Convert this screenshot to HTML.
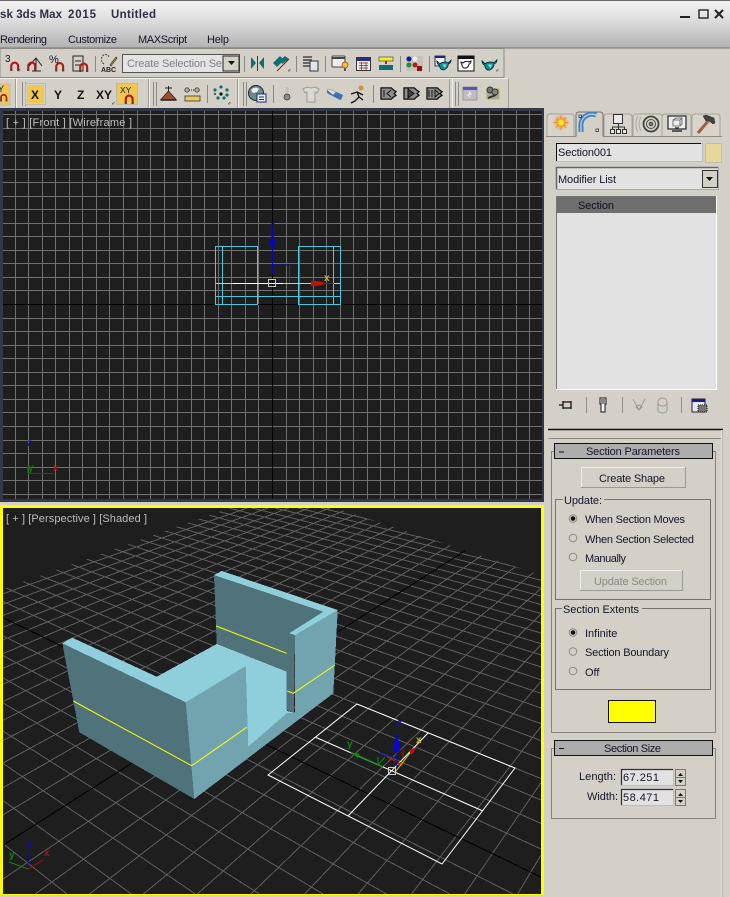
<!DOCTYPE html>
<html lang="en"><head><meta charset="utf-8"><title>3ds Max</title>
<style>
html,body{margin:0;padding:0;background:#d4d0c8;width:730px;height:897px;overflow:hidden}
svg{display:block;position:absolute;left:0;top:0}
text{font-family:"Liberation Sans",sans-serif;font-size:11px;fill:#14142a}
.g text,text.vl{fill:#bdbdbd;font-size:11px}
</style></head><body>
<svg id="s" width="730" height="897" viewBox="0 0 730 897" xmlns="http://www.w3.org/2000/svg">
<defs>
<linearGradient id="tb" x1="0" y1="0" x2="0" y2="1"><stop offset="0" stop-color="#f2f2f2"/><stop offset=".35" stop-color="#e2e2e2"/><stop offset="1" stop-color="#b2b2b2"/></linearGradient>
<clipPath id="cf"><rect x="3" y="111" width="539" height="388"/></clipPath>
<clipPath id="cp"><rect x="3" y="508" width="538" height="386"/></clipPath>
<clipPath id="cg"><polygon points="3,589 280,490 541,575 541,894 3,894"/></clipPath>
<radialGradient id="sun"><stop offset="0" stop-color="#ffe040"/><stop offset=".5" stop-color="#f0a040"/><stop offset="1" stop-color="#e8c0a0" stop-opacity=".3"/></radialGradient>
<symbol id="mg" viewBox="0 0 16 16" overflow="visible">
<path d="M2 15V8a5.5 5.5 0 0 1 11 0v7" fill="none" stroke="#b01818" stroke-width="3.4"/>
<path d="M.3 13h3.4v3H.3zM11.3 13h3.4v3h-3.4z" fill="#444"/>
</symbol>
<symbol id="tp" viewBox="0 0 18 14" overflow="visible">
<path d="M1 3l3 3h1c1-2 7-2 9-1l3-3c0 2-1 4-3 4 0 3-2 6-5 7H7C5 12 4 10 4 8 2 7 1 5 1 3z" fill="#0f8d8f" stroke="#04242a" stroke-width=".9"/>
<path d="M7 7l5 0-2 4z" fill="#7fe0e0"/>
</symbol>
<symbol id="key" viewBox="0 0 18 16" overflow="visible">
<path d="M1 2h11l2 2 3 2-2 2 2 2-3 2-2 2H1z" fill="#8e8e8e" stroke="#111" stroke-width="1.4"/>
</symbol>
</defs>

<!-- title bar -->
<rect width="730" height="48" fill="url(#tb)"/>
<rect width="730" height="1" fill="#666"/>
<rect y="47.5" width="730" height="1" fill="#777"/>
<text x="0" y="18" font-weight="bold" style="font-size:11.5px;fill:#2c3044" textLength="62">sk 3ds Max</text>
<text x="68" y="18" font-weight="bold" style="font-size:11.5px;fill:#2c3044" textLength="28">2015</text>
<text x="111" y="18" font-weight="bold" style="font-size:11.5px;fill:#2c3044" textLength="45">Untitled</text>
<rect x="680" y="16" width="10" height="2" fill="#222"/>
<rect x="699" y="10" width="9" height="8" fill="none" stroke="#222" stroke-width="1.4"/>
<path d="M715 10l8 8m0-8l-8 8" stroke="#222" stroke-width="2" fill="none"/>
<text x="0" y="43" textLength="47" fill="#1c2036">Rendering</text>
<text x="68" y="43" textLength="49">Customize</text>
<text x="138" y="43" textLength="49">MAXScript</text>
<text x="207" y="43" textLength="22">Help</text>

<!-- toolbars -->
<rect y="48.5" width="504" height="29" fill="#d4d0c8" stroke="#8e8b84"/>
<path d="M0 78.5H508" stroke="#f2f0ea"/>
<rect x="-1" y="79" width="16" height="29" fill="#d4d0c8"/>
<path d="M0 108.5H508M15.500 79V108M148.500 79V108M237.500 79V108M449.500 79V108M508.500 79V108" stroke="#a09d96"/>
<path d="M16.500 79V108M149.500 79V108M238.500 79V108M452.500 79V108" stroke="#f2f0ea"/>
<path d="M22.500 82V106M25.500 82V106M153.500 82V106M156.500 82V106M243.500 82V106M246.500 82V106M455.500 82V106M458.500 82V106" stroke="#8a8a86"/>

<!-- row 1 icons -->
<text x="5" y="62" style="font-size:10px">3</text><use href="#mg" x="10" y="60" width="10" height="12"/>
<path d="M18 71l2 0 0-2z" fill="#fff" stroke="#333" stroke-width=".5"/>
<path d="M29 66l7-8 6 8M36 58v13M32 71h9" fill="none" stroke="#222"/><use href="#mg" x="27" y="60" width="10" height="12"/>
<text x="49" y="63" style="font-size:11px">%</text><use href="#mg" x="55" y="61" width="10" height="11"/>
<rect x="73" y="56" width="10" height="15" fill="none" stroke="#222"/><path d="M75 61h6M75 65h6" stroke="#222"/><use href="#mg" x="79" y="62" width="10" height="10"/>
<path d="M95.500 56V72" stroke="#888"/>
<path d="M104 64a4 5 0 1 1 5-7" fill="none" stroke="#444" stroke-dasharray="2 1"/><path d="M110 65l6-8 1 1-6 8z" fill="#d8a040" stroke="#333" stroke-width=".7"/>
<text x="101" y="72" font-weight="bold" style="font-size:7px;fill:#222" textLength="15">ABC</text>

<rect x="122.500" y="54.500" width="117" height="18" fill="#e4e4e4" stroke="#555"/>
<text x="127" y="67" style="fill:#7d8288" textLength="95">Create Selection Se</text>
<rect x="223" y="56" width="16" height="15" fill="#d4d0c8" stroke="#222" stroke-width="1"/>
<path d="M228 61h7l-3.500 4z" fill="#111"/>
<path d="M244.500 56V72" stroke="#888"/>
<path d="M257.500 56V71" stroke="#7d1d1d"/><path d="M251 57l5 6-5 6zM264 57l-5 6 5 6z" fill="#0f7070"/>
<path d="M273 63l7-7 4 4-7 7z" fill="#0f7070"/><path d="M280 60l5-4 4 3-7 5z" fill="#0f7070"/><path d="M277 71l12-12" stroke="#7d1d1d"/>
<path d="M288 71l2 0 0-2z" fill="#fff" stroke="#333" stroke-width=".5"/>
<path d="M296.500 56V72" stroke="#888"/>
<path d="M303 57h9M303 60h9M303 63h9M303 66h7" stroke="#444" stroke-width="1.500"/><rect x="310" y="61" width="8" height="10" fill="#dfe6ef" stroke="#333"/>
<path d="M325.500 56V72" stroke="#888"/>
<rect x="332" y="56" width="13" height="11" rx="1" fill="#eee" stroke="#444"/><path d="M332 58h13" stroke="#444" stroke-width="2"/>
<circle cx="345" cy="65" r="3" fill="#f0c030" stroke="#a04010" stroke-width=".7"/><rect x="344" y="68" width="2" height="3" fill="#555"/>
<rect x="356.500" y="57.500" width="14" height="13" fill="#eee" stroke="#333"/><rect x="357" y="58" width="13" height="3" fill="#26307c"/>
<path d="M359 63h9M359 65.500h9M359 68h9" stroke="#b05030"/><path d="M361.500 62v8M366 62v8" stroke="#333" stroke-width=".6"/>
<rect x="379" y="57" width="14" height="4" fill="#f0f030" stroke="#333" stroke-width=".6"/><rect x="379" y="65" width="14" height="5" fill="#0f7070"/><path d="M386 61v3" stroke="#c02020" stroke-width="2"/>
<path d="M400.500 56V72" stroke="#888"/>
<rect x="406" y="56" width="17" height="15" fill="#c5c2bc"/>
<circle cx="409" cy="59" r="2.500" fill="#111a90"/><circle cx="415" cy="59" r="2.500" fill="#eee"/><circle cx="409" cy="65" r="2.500" fill="#109040"/><circle cx="415" cy="65" r="2.500" fill="#c01818"/><rect x="417" y="66" width="5" height="5" fill="#901010"/>
<path d="M429.500 56V72" stroke="#888"/>
<rect x="435" y="56" width="10" height="10" fill="#eee" stroke="#334"/><rect x="435" y="56" width="10" height="2" fill="#23237a"/><use href="#tp" x="436" y="58" width="16" height="13"/>
<rect x="458" y="56" width="16" height="15" fill="#fff" stroke="#111"/><rect x="458" y="56" width="16" height="3" fill="#111"/>
<path d="M461 62l2 1c2-2 5-2 6-1l2-1c0 2-1 3-2 3 0 2-2 4-3 4h-2c-1 0-2-2-2-3-1-1-1-2-1-3z" fill="#fff" stroke="#111"/>
<use href="#tp" x="481" y="58" width="17" height="13"/><path d="M496 71l2 0 0-2z" fill="#fff" stroke="#333" stroke-width=".5"/>

<!-- row 2 icons -->
<rect x="0" y="84" width="10" height="21" fill="#f0c850" stroke="#bbb"/><text x="-2" y="92" style="font-size:9px">Y</text><use href="#mg" x="0" y="92" width="8" height="11"/>
<rect x="25.500" y="83.500" width="20" height="21" fill="#d0d0ca" stroke="#bdbab2"/><rect x="27" y="85" width="17" height="18" fill="#f0c850"/>
<text x="31" y="99" font-weight="bold" style="font-size:12px;fill:#111">X</text>
<text x="54" y="99" font-weight="bold" style="font-size:12px;fill:#111">Y</text>
<text x="77" y="99" font-weight="bold" style="font-size:12px;fill:#111">Z</text>
<text x="96" y="99" font-weight="bold" style="font-size:12px;fill:#111">XY</text>
<path d="M112 104l2 0 0-2z" fill="#fff" stroke="#333" stroke-width=".5"/>
<rect x="116.500" y="83.500" width="21" height="21" fill="#f0c850" stroke="#bdbab2"/><text x="120" y="93" style="font-size:8.500px">XY</text><use href="#mg" x="124" y="94" width="11" height="10"/>
<path d="M168.500 86v8" stroke="#222"/><path d="M165 88h7" stroke="#222"/><path d="M168.500 91l8 9h-16z" fill="#9c5030" stroke="#222" stroke-width=".8"/><path d="M161 100h15" stroke="#222" stroke-width="1.500"/>
<circle cx="187" cy="90" r="2.200" fill="#aaa" stroke="#222" stroke-width=".7"/><circle cx="197" cy="90" r="2.200" fill="#aaa" stroke="#222" stroke-width=".7"/><path d="M189 90h6" stroke="#222" stroke-dasharray="1 1"/>
<rect x="185" y="96" width="15" height="5" fill="#e8c860" stroke="#333" stroke-width=".8"/>
<path d="M207.500 85V103" stroke="#888"/>
<g fill="#0f7070"><circle cx="221" cy="87" r="1.600"/><circle cx="215" cy="90" r="1.600"/><circle cx="227" cy="90" r="1.600"/><circle cx="218" cy="98" r="1.600"/><circle cx="224" cy="98" r="1.600"/><circle cx="221" cy="94" r="1.600" fill="#111"/><circle cx="215" cy="94" r="1.200" fill="#555"/><circle cx="227" cy="95" r="1.600"/></g>
<path d="M228 104l2 0 0-2z" fill="#fff" stroke="#333" stroke-width=".5"/>
<circle cx="256" cy="93" r="7.500" fill="#6a8a8c" stroke="#222"/><path d="M251 90c3-3 6-3 8-1l-2 3-4 1z" fill="#e8eef0"/>
<rect x="257" y="94" width="9" height="8" fill="#e8eef0" stroke="#23237a"/><path d="M259 97h5M259 99.500h5" stroke="#23237a"/>
<path d="M273.500 85V103" stroke="#888"/>
<circle cx="287" cy="97" r="3" fill="#8c8c8c" stroke="#333" stroke-width=".7"/><path d="M287 87v6" stroke="#bbb" stroke-width="3" opacity=".7"/>
<path d="M303 89l4-2 4 1 4-1 4 2-2 4-2-1v10h-8V92l-2 1z" fill="#d8d8d4" stroke="#9a9a96"/>
<path d="M327 90l3-1 13 6-2 5-3-1-11-6z" fill="#4070b0"/><path d="M327 90l3-1 6 3-3 3z" fill="#d8dde0" stroke="#888" stroke-width=".5"/>
<path d="M351 94l6-2 2 5-4 4M357 92l6 3M355 101l-4 2M359 97l4 3" stroke="#111" stroke-width="1.300" fill="none"/><circle cx="361" cy="88" r="2.500" fill="#d09040"/>
<path d="M373.500 85V103" stroke="#888"/>
<use href="#key" x="380" y="86" width="17" height="15"/><path d="M384 90v7M391 90l-4 3.500 4 3.500" stroke="#111" fill="none"/>
<use href="#key" x="403" y="86" width="17" height="15"/><path d="M408 89l6 4.500-6 4.500z" fill="#444" stroke="#111"/>
<use href="#key" x="426" y="86" width="17" height="15"/><path d="M429 90v7M432 90v7M435 90l4 3.500-4 3.500z" stroke="#111" fill="none"/>
<rect x="463" y="87" width="14" height="13" fill="#c0bec4" stroke="#999"/><rect x="463" y="87" width="14" height="3" fill="#5a50c0"/><path d="M469 91l3 3-3 1 2 3-4-3 2-1z" fill="#eee"/>
<rect x="486" y="88" width="14" height="12" fill="#a8a8a0" stroke="#e0dc80"/><circle cx="490" cy="90" r="3" fill="#777" stroke="#333"/><circle cx="495" cy="92" r="3" fill="#888" stroke="#333"/><path d="M488 98l8-3" stroke="#333" stroke-width="2"/>

<!-- front viewport -->
<rect x="0" y="108" width="544" height="394" fill="#333a47"/>
<rect x="3" y="111" width="539" height="388" fill="#1e1e1e"/>
<g clip-path="url(#cf)"><g id="gf" shape-rendering="crispEdges"></g>
<g fill="none" shape-rendering="crispEdges">
<path d="M215.500 246.500H257.500V304.500H215.500ZM222.500 246.500V304.500M298.500 246.500H340.500V304.500H298.500ZM333.500 246.500V304.500M215.500 296.500H340.500" stroke="#4fc6dc"/>
<path d="M216 283.500H233M283 283.500H340" stroke="#f0dc00"/>
<path d="M233 283.500H283" stroke="#fff"/>
<path d="M272.500 273V228" stroke="#0606b0"/>
<path d="M272.500 265H289.500" stroke="#0606b0"/><path d="M289.500 265V283" stroke="#a01010"/>
<rect x="268.500" y="279.500" width="7" height="7" fill="none" stroke="#c8c8c8"/>
</g>
<path d="M272.500 232l2.500 10 1 3h-7l1-3z" fill="#0606c0"/>
<path d="M311 281h6l7 1.500v2l-7 1.500h-6z" fill="#c01010"/>
<path d="M324 283.500h10" stroke="#a01010"/>
<text x="270" y="228" font-weight="bold" style="font-size:10px;fill:#0a0ab0">z</text>
<text x="324" y="281" font-weight="bold" style="font-size:10px;fill:#c8b820">x</text>
<path d="M27.500 450V473.500H53" fill="none" stroke="#0808b0"/><path d="M28 473.500H53" stroke="#a01010"/>
<path d="M28 473V466" stroke="#0a7a10"/>
<text x="27" y="446" font-weight="bold" style="font-size:10px;fill:#0a0ab0">z</text>
<text x="28" y="471" font-weight="bold" style="font-size:10px;fill:#0a7a10">y</text>
<text x="53" y="471" font-weight="bold" style="font-size:10px;fill:#a01010">x</text>
</g>
<text class="vl" x="6" y="126" textLength="126" lengthAdjust="spacing">[ + ] [Front ] [Wireframe ]</text>

<!-- perspective viewport -->
<rect x="0" y="505" width="544" height="390" fill="#ffff00"/>
<rect x="3" y="508" width="538" height="386" fill="#1e1e1e"/>
<g clip-path="url(#cp)"><g clip-path="url(#cg)"><g id="gp" shape-rendering="crispEdges"></g></g>
<g shape-rendering="crispEdges">
<polygon points="62.300,643.300 185.700,702.300 194.300,799 79.300,732.300" fill="#4f727b"/>
<polygon points="62.300,643.300 72.300,637.700 156.700,676.700 216.700,644 245.700,666 185.700,702.300" fill="#8fcfdc"/>
<polygon points="185.700,702.300 245.700,666 248.300,746.700 295,712 295,635 337.700,610 333.300,693.300 194.300,799" fill="#72a4b0"/>
<polygon points="216.700,644 286.700,671.700 287,711 295,713 248.300,746.700 245.700,666" fill="#8fcfdc"/>
<polygon points="248.300,746.700 287,713 294.500,713 294.500,715" fill="#72a4b0"/>
<polygon points="214,575 323.300,611.700 289.300,633.300 295,635 294,713 286.700,710 286.700,671.700 216.700,644" fill="#4f727b"/>
<polygon points="214,575 221.700,571 337.700,610 295,635 289.300,633.300 323.300,611.700" fill="#8fcfdc"/>
</g>
<g fill="none" stroke-width="1">
<path d="M73.300 701L191.700 765.700 246.700 727.300M216 626L286.700 653.300M287.300 691L293.300 693.300 335 665" stroke="#ffff00"/>
<path d="M357 704L515 768 442 864 268 775ZM315 737L483 811M428 733L348 816" stroke="#fff"/>
<path d="M383 766.700L350.700 752.300" stroke="#0a8a10" stroke-width="1.200"/>
<path d="M378 757V765M378 765L385 757" stroke="#0a8a10"/>
<path d="M380 752L394 758" stroke="#1010c0"/>
<path d="M394 760L402 766M403 750V758M387 757L403 765" stroke="#c01010"/>
<path d="M397 771V743" stroke="#0606c0" stroke-width="1.200"/>
<path d="M396 771L410 753" stroke="#e8d000" stroke-width="1"/>
</g>
<path d="M396.700 733l2.500 10 .5 9h-6l.5-9z" fill="#0606d0"/>
<path d="M416.700 747l-8 3 3 5z" fill="#c01010"/>
<path d="M350.700 752.300l9 1.500-2 4.500z" fill="#0a8a10"/>
<rect x="388.500" y="767.500" width="7" height="7" fill="none" stroke="#d0d0d0"/>
<text x="397" y="726" font-weight="bold" style="font-size:10px;fill:#1010c0">z</text>
<text x="416" y="743" font-weight="bold" style="font-size:10px;fill:#d0b010">x</text>
<text x="347" y="747" font-weight="bold" style="font-size:10px;fill:#0a8a10">y</text>
<path d="M28 869V849" stroke="#0808b0" fill="none"/><path d="M28 869L43 860" stroke="#b01010" fill="none"/><path d="M28 869L9 862" stroke="#0a8a10" fill="none"/>
<text x="27" y="847" font-weight="bold" style="font-size:10px;fill:#0a0ab0">z</text>
<text x="9" y="858" font-weight="bold" style="font-size:10px;fill:#0a8a10">y</text>
<text x="44" y="856" font-weight="bold" style="font-size:10px;fill:#b01010">x</text>
</g>
<text class="vl" x="6" y="522" textLength="141" lengthAdjust="spacing">[ + ] [Perspective ] [Shaded ]</text>

<!-- command panel -->
<path d="M547 136.500V117q0-3 3-3H571q3 0 3 3V136.500M604 136.500V117q0-3 3-3H629q3 0 3 3V136.500M633 136.500V117q0-3 3-3H659q3 0 3 3V136.500M662 136.500V117q0-3 3-3H688q3 0 3 3V136.500M692 136.500V117q0-3 3-3H717q3 0 3 3V136.500" fill="#d8d4cc" stroke="#a5a29a"/>
<path d="M546 136.500H576M603 136.500H722" stroke="#8e8b84"/>
<path d="M576 136.500V115q0-3 3-3H600q3 0 3 3V136.500" fill="#d4d0c8" stroke="#75726c"/>
<circle cx="561" cy="122.500" r="8" fill="url(#sun)"/>
<g stroke="#e89030" stroke-width="1"><path d="M561 115v15M553.500 122.500h15M556 117.500l10 10M566 117.500l-10 10"/></g><circle cx="561" cy="122.500" r="3" fill="#f8e030"/>
<path d="M581 132V127a11 11 0 0 1 15-12" fill="none" stroke="#3f7fc0" stroke-width="5"/><path d="M581 132V127a11 11 0 0 1 15-12" fill="none" stroke="#a5cbe6" stroke-width="1.500"/>
<rect x="579" y="115" width="2.500" height="2.500" fill="#fff" stroke="#111" stroke-width=".7"/><rect x="596" y="129" width="2.500" height="2.500" fill="#fff" stroke="#111" stroke-width=".7"/>
<g fill="#e8e8e8" stroke="#333"><rect x="613.500" y="114.500" width="9" height="9"/><rect x="610.500" y="129.500" width="4" height="4"/><rect x="616.500" y="129.500" width="4" height="4"/><rect x="622.500" y="129.500" width="4" height="4"/></g>
<path d="M618.500 124V129.500M612.500 129.500V127H624.500V129.500" fill="none" stroke="#333"/>
<g fill="none" stroke="#444"><circle cx="651" cy="124" r="7.500" stroke-width="1.800"/><circle cx="651" cy="124" r="4.500"/><circle cx="651" cy="124" r="1.500" stroke-width="1.500"/><path d="M641 117a14 14 0 0 0 0 14M638 116a16 16 0 0 0 0 16" stroke="#aaa"/></g>
<rect x="668" y="116" width="18" height="13" fill="#eee" stroke="#333" stroke-width="1.300"/><path d="M675 128h4M672 131h10" stroke="#333" stroke-width="1.500"/><path d="M673 120l3-2h6v6l-2 2h-7zM673 120h7v6M680 120l2-2" fill="none" stroke="#555" stroke-width=".8"/>
<path d="M698 133l11-13" stroke="#a06040" stroke-width="3"/><path d="M703 116l3-1 8 3 1 5-2 1-5-4-2 1z" fill="#444" stroke="#222" stroke-width=".5"/>

<rect x="556.500" y="143.500" width="146" height="18" fill="#e2e2e2" stroke="#bbb"/><path d="M556.500 161V143.500H701" fill="none" stroke="#111"/>
<text x="558" y="156" textLength="54">Section001</text>
<rect x="705.500" y="143.500" width="16" height="19" fill="#e6d898" stroke="#c2bcae"/>

<rect x="556.500" y="167.500" width="162" height="22" fill="#e2e2e2" stroke="#aaa"/><path d="M556.500 189V167.500H718" fill="none" stroke="#666" stroke-width="1.500"/>
<text x="558" y="183" textLength="58">Modifier List</text>
<rect x="702.500" y="170.500" width="15" height="17" fill="#d4d0c8" stroke="#333"/><path d="M706 177h7l-3.500 4z" fill="#111"/>

<rect x="556.500" y="196.500" width="160" height="193" fill="#e2e2e2" stroke="#fff"/><path d="M556.500 389V196.500H716" fill="none" stroke="#777"/>
<rect x="557" y="197" width="159" height="16" fill="#6e6e6e"/>
<text x="578" y="209" textLength="36" style="fill:#101020">Section</text>

<path d="M559 405h4M563 401v8M563 402h8v6h-8zM571 401v8" fill="none" stroke="#111" stroke-width="1.300"/>
<path d="M586.500 397V413M622.500 397V413M681.500 397V413" stroke="#8e8e8a"/>
<path d="M600 398h6v6h-1v8h-4v-8h-1z" fill="#fff" stroke="#111"/><rect x="601" y="398" width="4" height="6" fill="#888"/>
<path d="M633 399l6 11 6-11M639 410l-3-3 3-2 3 2z" fill="none" stroke="#999"/>
<path d="M658 402a4.500 4 0 0 1 9 0v8a4.500 3 0 0 1-9 0zM658 403a4.500 3 0 0 0 9 0" fill="none" stroke="#999"/>
<rect x="692" y="399" width="13" height="13" fill="#e8e8f0" stroke="#223"/><rect x="692" y="399" width="13" height="3" fill="#1a1a90"/><rect x="698" y="405" width="9" height="7" fill="#777" stroke="#111" stroke-dasharray="1 1"/>

<path d="M548 429.500H723" stroke="#111" stroke-width="1.500"/>
<path d="M548.500 438.500H721" stroke="#8e8b84"/>
<path d="M721.500 430V897" stroke="#e4e1da"/><path d="M722.500 430V897" stroke="#b8b5ae"/>

<path d="M554 451.500H551.500V732.500H715.500V451.500H712" fill="none" stroke="#86837c"/>
<rect x="554.500" y="443.500" width="158" height="15" fill="#adadad" stroke="#111"/>
<path d="M559 452h5" stroke="#111"/>
<text x="586" y="455" textLength="94">Section Parameters</text>
<rect x="581.500" y="467.500" width="104" height="20" fill="#d4d0c8" stroke="#999"/><path d="M581.500 487V467.500H685" fill="none" stroke="#eee"/>
<text x="599" y="482" textLength="66">Create Shape</text>

<path d="M563 499.500H555.500V599.500H710.500V499.500H604" fill="none" stroke="#76736c"/>
<text x="564" y="504" textLength="38">Update:</text>
<g fill="#d4d0c8" stroke="#8a8a8a"><circle cx="573" cy="518.500" r="3.800"/><circle cx="573" cy="538" r="3.800"/><circle cx="573" cy="557" r="3.800"/><circle cx="573" cy="632.500" r="3.800"/><circle cx="573" cy="651.500" r="3.800"/><circle cx="573" cy="671" r="3.800"/></g>
<circle cx="573" cy="518.500" r="2.300" fill="#111"/><circle cx="573" cy="632.500" r="2.300" fill="#111"/>
<text x="585" y="523" textLength="100">When Section Moves</text>
<text x="585" y="543" textLength="109">When Section Selected</text>
<text x="585" y="562" textLength="41">Manually</text>
<rect x="580.500" y="570.500" width="102" height="20" fill="#d4d0c8" stroke="#999"/><path d="M580.500 590V570.500H682" fill="none" stroke="#eee"/>
<text x="594" y="585" textLength="73" style="fill:#8a8a8a">Update Section</text>

<path d="M562 608.500H555.500V689.500H710.500V608.500H642" fill="none" stroke="#76736c"/>
<text x="563" y="613" textLength="76">Section Extents</text>
<text x="585" y="637">Infinite</text>
<text x="585" y="656" textLength="84">Section Boundary</text>
<text x="585" y="676">Off</text>
<rect x="608.500" y="700.500" width="47" height="22" fill="#ffff00" stroke="#111"/>

<path d="M554 748.500H551.500V818.500H715.500V748.500H712" fill="none" stroke="#86837c"/>
<rect x="554.500" y="740.500" width="158" height="15" fill="#adadad" stroke="#111"/>
<path d="M559 748.500h5" stroke="#111"/>
<text x="604" y="752" textLength="57">Section Size</text>
<text x="579" y="780" textLength="37">Length:</text>
<text x="587" y="800" textLength="31">Width:</text>
<rect x="621.500" y="769.500" width="52" height="16" fill="#e2e2e2" stroke="#bbb"/><path d="M621.500 785V769.500H673" fill="none" stroke="#333" stroke-width="1.300"/>
<rect x="621.500" y="789.500" width="52" height="16" fill="#e2e2e2" stroke="#bbb"/><path d="M621.500 805V789.500H673" fill="none" stroke="#333" stroke-width="1.300"/>
<text x="623" y="781" textLength="36">67.251</text>
<text x="623" y="801" textLength="36">58.471</text>
<rect x="675.500" y="769.500" width="10" height="16" fill="#d4d0c8" stroke="#777"/><path d="M675.500 777.500h10" stroke="#777"/><path d="M678 776h5l-2.500-3zM678 780h5l-2.500 3z" fill="#111"/>
<rect x="675.500" y="789.500" width="10" height="16" fill="#d4d0c8" stroke="#777"/><path d="M675.500 797.500h10" stroke="#777"/><path d="M678 796h5l-2.500-3zM678 800h5l-2.500 3z" fill="#111"/>
</svg>
<script>
(function(){
var NS='http://www.w3.org/2000/svg';
function line(p,x1,y1,x2,y2,c){var l=document.createElementNS(NS,'line');l.setAttribute('x1',x1);l.setAttribute('y1',y1);l.setAttribute('x2',x2);l.setAttribute('y2',y2);l.setAttribute('stroke',c);p.appendChild(l);}
var gf=document.getElementById('gf'),i,st=13.55,C='#707070';
for(i=-19;i<=19;i++){if(!i)continue;var x=Math.round(272+i*st)+.5;line(gf,x,111,x,499,C);}
for(i=-14;i<=14;i++){if(!i)continue;var y=Math.round(304+i*st)+.5;line(gf,3,y,542,y,C);}
line(gf,272.5,111,272.5,499,'#000');line(gf,3,304.5,542,304.5,'#000');
/* homography: (u,v) -> L(0,0) T(1,0) R(1,1) B(0,1) */
var x0=268,y0=775,x1=357,y1=704,x2=515,y2=768,x3=442,y3=864;
var dx1=x1-x2,dx2=x3-x2,sx=x0-x1+x2-x3,dy1=y1-y2,dy2=y3-y2,sy=y0-y1+y2-y3;
var den=dx1*dy2-dx2*dy1,g=(sx*dy2-dx2*sy)/den,h=(dx1*sy-sx*dy1)/den;
var a=x1-x0+g*x1,b=x3-x0+h*x3,c=x0,d=y1-y0+g*y1,e=y3-y0+h*y3,f=y0;
function P(u,v){var w=g*u+h*v+1;return [(a*u+b*v+c)/w,(d*u+e*v+f)/w,w];}
function inv(x,y){var A=a-g*x,B=b-h*x,C2=c-x,D=d-g*y,E=e-h*y,F=f-y,q=A*E-B*D;return [(B*F-C2*E)/q,(C2*D-A*F)/q];}
var u0=inv(267,745)[0],v0=inv(132,763)[1],du=1/5.2,dv=1/5.6,gp=document.getElementById('gp'),N=30;
var umin=u0-N*du,umax=u0+N*du,vmin=v0-N*dv,vmax=v0+N*dv;
/* clip a segment to the viewport rectangle */
function clip(p,q){var t0=0,t1=1,dx=q[0]-p[0],dy=q[1]-p[1],P2=[-dx,dx,-dy,dy],Q=[p[0]-3,541-p[0],p[1]-508,894-p[1]];
 for(var k=0;k<4;k++){if(P2[k]===0){if(Q[k]<0)return null;continue;}var r=Q[k]/P2[k];if(P2[k]<0){if(r>t1)return null;if(r>t0)t0=r;}else{if(r<t0)return null;if(r<t1)t1=r;}}
 return [p[0]+t0*dx,p[1]+t0*dy,p[0]+t1*dx,p[1]+t1*dy];}
function seg(u1,v1,u2,v2,col){var p=P(u1,v1),q=P(u2,v2),w1=p[2],w2=q[2];
 if(w1<=.02&&w2<=.02)return;
 if(w1<=.02||w2<=.02){var t=(.02-w1)/(w2-w1),t1=w1<=.02?t:0,t2=w1<=.02?1:t;
 p=P(u1+(u2-u1)*t1,v1+(v2-v1)*t1);q=P(u1+(u2-u1)*t2,v1+(v2-v1)*t2);}
 var r=clip(p,q);if(r)line(gp,r[0].toFixed(1),r[1].toFixed(1),r[2].toFixed(1),r[3].toFixed(1),col);}
for(i=-N;i<=N;i++){if(i){seg(u0+i*du,vmin,u0+i*du,vmax,'#5e5e5e');seg(umin,v0+i*dv,umax,v0+i*dv,'#5e5e5e');}}
seg(u0,vmin,u0,vmax,'#000');seg(umin,v0,umax,v0,'#000');
})();
</script>
</body></html>
